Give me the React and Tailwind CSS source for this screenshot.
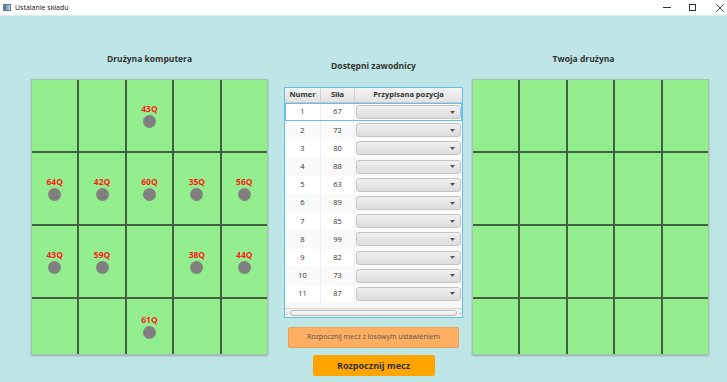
const computer = [
  [null, null, "43Q", null, null],
  ["64Q", "42Q", "60Q", "35Q", "56Q"],
  ["43Q", "59Q", null, "38Q", "44Q"],
  [null, null, "61Q", null, null],
];

const players = [
  [1, 67], [2, 72], [3, 80], [4, 88], [5, 63], [6, 89],
  [7, 85], [8, 99], [9, 82], [10, 73], [11, 87],
];

function Field({ rows, title, titleClass = "" }) {
  return (
    <div className="flex flex-col w-[237px] pt-[35px]">
      <div className={"h-[16px] text-center text-[8.5px] font-bold leading-[16px] text-[#333] " + titleClass}>{title}</div>
      <div className="mt-[12px] h-[276px] grid grid-cols-5 grid-rows-[71px_71px_71px_1fr] gap-[2px] bg-[#455f45] border border-[#a9c3a9] shadow-[0_1px_2px_rgba(0,0,0,0.25)]">
        {rows.map((row, r) =>
          row.map((p, c) => (
            <div key={r + "-" + c} className="bg-[#93ee8e] flex flex-col items-center justify-center">
              {p && (
                <>
                  <span className="text-[8.5px] font-bold leading-[11px] text-[#ff1a1a]">{p}</span>
                  <span className="mt-[1px] w-[13px] h-[13px] rounded-full bg-[#808080]" />
                </>
              )}
            </div>
          ))
        )}
      </div>
    </div>
  );
}

function Combo() {
  return (
    <div className="h-[14px] w-full rounded-[3px] border border-[#c4c4c4] bg-gradient-to-b from-[#f0f0f0] to-[#dcdcdc] flex items-center justify-end pr-[5px]">
      <svg width="5" height="3" viewBox="0 0 5 3"><path d="M0 0h5L2.5 3z" fill="#555" /></svg>
    </div>
  );
}

const empty = [0, 1, 2, 3].map(() => [null, null, null, null, null]);

export default function App() {
  return (
    <div className="w-[727px] h-[382px] flex flex-col overflow-hidden" style={{ fontFamily: '"Open Sans", "Noto Sans", sans-serif' }}>
      {/* title bar */}
      <div className="h-[16px] bg-white flex items-center border-b border-[#d8eeee]">
        <div className="ml-[3px] w-[8px] h-[7px] border border-[#6a7a8a] bg-gradient-to-r from-[#3a6ea5] to-[#c8d8e8]" />
        <span className="ml-[4px] text-[7px] text-[#111] leading-none">Ustalanie składu</span>
        <div className="ml-auto flex items-center">
          <span className="w-[8px] h-px bg-[#333] mr-[18px]" />
          <span className="w-[7px] h-[7px] border border-[#333] mr-[20px]" />
          <svg width="8" height="8" viewBox="0 0 8 8" className="mr-[3px]">
            <path d="M0.5 0.5L7.5 7.5M7.5 0.5L0.5 7.5" stroke="#333" strokeWidth="0.9" />
          </svg>
        </div>
      </div>

      {/* content */}
      <div className="flex-1 bg-[#bfe6e6] flex pl-[31px]">
        <Field rows={computer} title="Drużyna komputera" />

        <div className="ml-[16px] w-[179px] flex flex-col pt-[42px]">
          <div className="h-[16px] text-center text-[8.5px] font-bold leading-[16px] text-[#333]">Dostępni zawodnicy</div>
          <div className="mt-[13px] h-[231px] border border-[#5fc2e6] bg-[#f7f7f7] flex flex-col">
            <div className="h-[15px] flex text-[7.5px] font-bold text-[#333] bg-gradient-to-b from-[#f4f4f4] to-[#e2e2e2] border-b border-[#c8c8c8]">
              <div className="w-[36px] flex items-center justify-center border-r border-[#d0d0d0]">Numer</div>
              <div className="w-[34px] flex items-center justify-center border-r border-[#d0d0d0]">Siła</div>
              <div className="flex-1 flex items-center justify-center">Przypisana pozycja</div>
            </div>
            <div className="flex-1 flex flex-col">
              {players.map(([n, s], i) => (
                <div
                  key={n}
                  className={
                    "h-[18.2px] flex text-[7.5px] text-[#333] " +
                    (i % 2 === 0 ? "bg-white " : "bg-[#f9f9f9] ") +
                    (i === 0 ? "outline outline-1 outline-[#5fc2e6] -outline-offset-1" : "")
                  }
                >
                  <div className="w-[36px] flex items-center justify-center border-r border-[#f0f0f0]">{n}</div>
                  <div className="w-[34px] flex items-center justify-center border-r border-[#f0f0f0]">{s}</div>
                  <div className="flex-1 flex items-center pl-[1px] pr-[1px]">
                    <Combo />
                  </div>
                </div>
              ))}
              <div className="flex-1 flex">
                <div className="w-[36px] border-r border-[#f0f0f0]" />
                <div className="w-[34px] border-r border-[#f0f0f0]" />
              </div>
            </div>
            <div className="h-[9px] bg-[#f0f0f0] border-t border-[#d8d8d8] flex items-center px-[1px] gap-[2px]">
              <span className="text-[6px] leading-none text-[#999]">‹</span>
              <div className="flex-1 h-[6px] rounded-full border border-[#bbb] bg-gradient-to-b from-[#fafafa] to-[#e6e6e6]" />
              <span className="text-[6px] leading-none text-[#999]">›</span>
            </div>
          </div>
          <button className="mt-[9px] mx-[4px] h-[21px] rounded-[2px] bg-[#ffae62] border border-[#f0a050] text-[7px] text-[#555]">
            Rozpocznij mecz z losowym ustawieniem
          </button>
          <button className="mt-[7px] mx-auto w-[122px] h-[21px] rounded-[2px] bg-[#ffa500] text-[9px] font-bold text-[#333]">
            Rozpocznij mecz
          </button>
        </div>

        <div className="ml-[9px]">
          <Field rows={empty} title="Twoja drużyna" titleClass="pr-[14px]" />
        </div>
      </div>
    </div>
  );
}
